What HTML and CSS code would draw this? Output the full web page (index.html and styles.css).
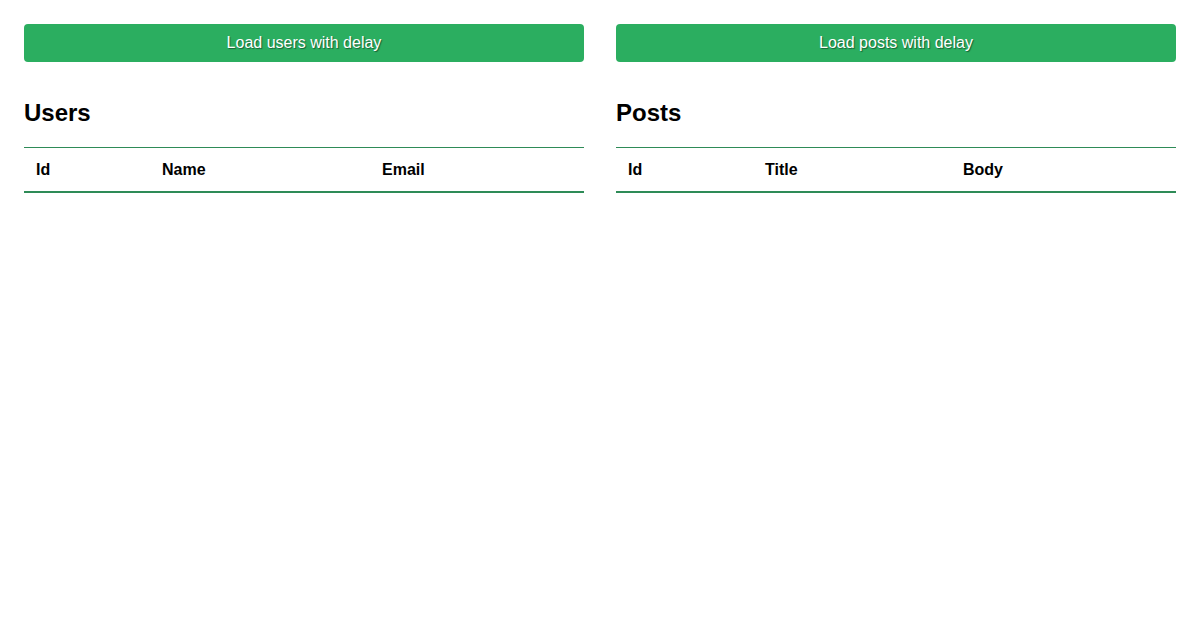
FILE: index.html
```html
<!DOCTYPE html>
<html>
<head>
<meta charset="utf-8">
<link rel="stylesheet" href="styles.css">
</head>
<body>
<div class="page">
  <section class="panel">
    <button class="load-btn">Load users with delay</button>
    <h2 class="title">Users</h2>
    <table class="data">
      <colgroup><col class="u-id"><col class="u-name"><col></colgroup>
      <thead><tr><th>Id</th><th>Name</th><th>Email</th></tr></thead>
      <tbody></tbody>
    </table>
  </section>
  <section class="panel">
    <button class="load-btn">Load posts with delay</button>
    <h2 class="title">Posts</h2>
    <table class="data">
      <colgroup><col class="p-id"><col class="p-title"><col></colgroup>
      <thead><tr><th>Id</th><th>Title</th><th>Body</th></tr></thead>
      <tbody></tbody>
    </table>
  </section>
</div>
</body>
</html>
```
FILE: styles.css
```css
html, body {
  margin: 0;
  padding: 0;
  background: #fff;
  font-family: "Liberation Sans", Arial, sans-serif;
  color: #000;
}
.page {
  display: grid;
  grid-template-columns: 1fr 1fr;
  gap: 32px;
  padding: 24px;
}
.panel {
  min-width: 0;
}
.load-btn {
  display: block;
  width: 100%;
  height: 38px;
  border: none;
  border-radius: 4px;
  background: #2bae60;
  color: #fff;
  font-family: "Liberation Sans", Arial, sans-serif;
  font-size: 16px;
  text-shadow: 1px 1px 1px rgba(0, 0, 0, 0.45);
  cursor: pointer;
  padding: 0;
}
.title {
  font-size: 24px;
  line-height: 28px;
  font-weight: bold;
  margin: 37px 0 20px;
}
.data {
  width: 100%;
  table-layout: fixed;
  border-collapse: collapse;
  border-top: 1px solid #2e8b57;
  border-bottom: 2px solid #2e8b57;
}
.u-id { width: 126px; }
.u-name { width: 220px; }
.p-id { width: 137px; }
.p-title { width: 198px; }
.data th {
  text-align: left;
  font-size: 16px;
  line-height: 19px;
  font-weight: bold;
  padding: 12px;
}
```
